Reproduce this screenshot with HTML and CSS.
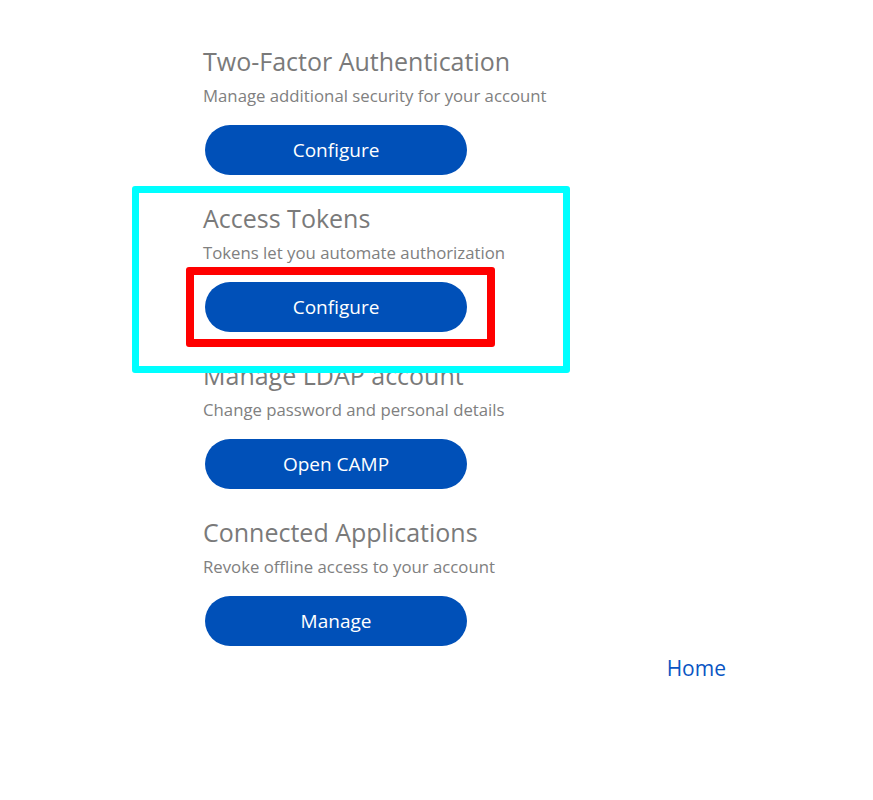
FILE: index.html
```html
<!DOCTYPE html>
<html>
<head>
<meta charset="utf-8">
<link rel="stylesheet" href="styles.css">
</head>
<body>
<div class="page">
  <div class="list">
    <section class="item">
      <h2 class="title">Two-Factor Authentication</h2>
      <p class="desc">Manage additional security for your account</p>
      <button class="btn">Configure</button>
    </section>
    <section class="item">
      <h2 class="title">Access Tokens</h2>
      <p class="desc">Tokens let you automate authorization</p>
      <button class="btn">Configure</button>
    </section>
    <section class="item">
      <h2 class="title">Manage LDAP account</h2>
      <p class="desc">Change password and personal details</p>
      <button class="btn">Open CAMP</button>
    </section>
    <section class="item">
      <h2 class="title">Connected Applications</h2>
      <p class="desc">Revoke offline access to your account</p>
      <button class="btn">Manage</button>
    </section>
  </div>
  <div class="footer"><a class="home" href="#">Home</a></div>
  <div class="mark-cyan"></div>
  <div class="mark-red"></div>
</div>
</body>
</html>
```
FILE: styles.css
```css
html, body {
  margin: 0;
  padding: 0;
  background: #fff;
}
body {
  font-family: "Open Sans", "Noto Sans", sans-serif;
  width: 873px;
  height: 800px;
  overflow: hidden;
}
.page {
  position: relative;
  width: 873px;
  height: 800px;
}
.list {
  padding-top: 44px;
  padding-left: 203px;
  display: flex;
  flex-direction: column;
}
.item {
  height: 157px;
  display: flex;
  flex-direction: column;
  align-items: flex-start;
}
.title {
  margin: 0;
  font-size: 25px;
  font-weight: 400;
  line-height: 34px;
  color: #7a7a7a;
}
.desc {
  margin: 6px 0 0;
  font-size: 16.75px;
  line-height: 24px;
  color: #808080;
}
.btn {
  margin-top: 17px;
  margin-left: 2px;
  width: 262px;
  height: 50px;
  border: none;
  border-radius: 25px;
  background: #0050b8;
  color: #fff;
  font-family: inherit;
  font-size: 19px;
  padding: 0;
}
.footer {
  display: flex;
  justify-content: flex-end;
  padding-right: 147px;
  margin-top: -18px;
}
.home {
  color: #0a55c3;
  text-decoration: none;
  font-size: 21px;
  line-height: 28px;
}
.mark-cyan {
  position: absolute;
  left: 132px;
  top: 186px;
  width: 424px;
  height: 173px;
  border: 7px solid #00ffff;
  border-radius: 3px;
}
.mark-red {
  position: absolute;
  left: 186px;
  top: 267px;
  width: 293px;
  height: 64px;
  border: 8px solid #ff0000;
  border-radius: 3px;
}
```
